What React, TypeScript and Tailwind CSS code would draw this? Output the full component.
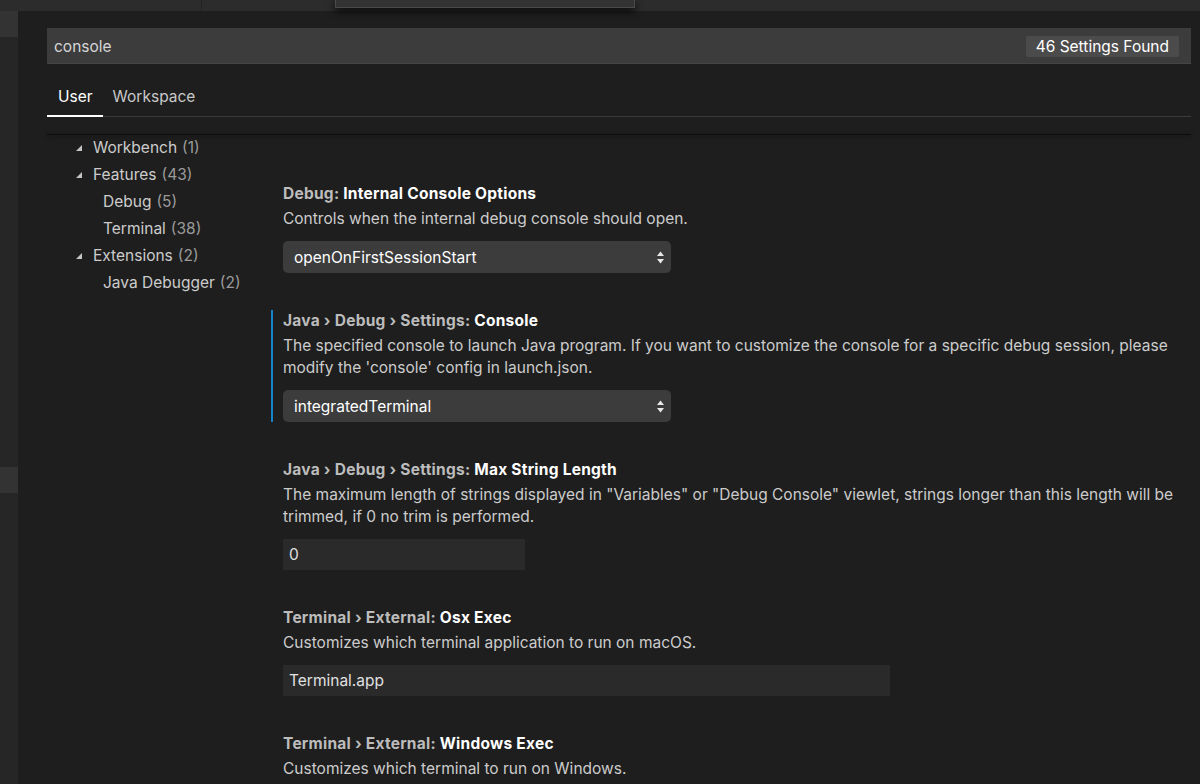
import React from "react";

type Setting = {
    prefix: string;
    name: string;
    desc: React.ReactNode;
    control: "select" | "input";
    value: string;
    width: string;
    focused?: boolean;
};

const settings: Setting[] = [
    {
        prefix: "Debug: ",
        name: "Internal Console Options",
        desc: "Controls when the internal debug console should open.",
        control: "select",
        value: "openOnFirstSessionStart",
        width: "w-[388px]",
    },
    {
        prefix: "Java › Debug › Settings: ",
        name: "Console",
        desc: (
            <>
                The specified console to launch Java program. If you want to customize the console for a specific debug session, please
                <br />
                modify the 'console' config in launch.json.
            </>
        ),
        control: "select",
        value: "integratedTerminal",
        width: "w-[388px]",
        focused: true,
    },
    {
        prefix: "Java › Debug › Settings: ",
        name: "Max String Length",
        desc: (
            <>
                The maximum length of strings displayed in "Variables" or "Debug Console" viewlet, strings longer than this length will be
                <br />
                trimmed, if 0 no trim is performed.
            </>
        ),
        control: "input",
        value: "0",
        width: "w-[242px]",
    },
    {
        prefix: "Terminal › External: ",
        name: "Osx Exec",
        desc: "Customizes which terminal application to run on macOS.",
        control: "input",
        value: "Terminal.app",
        width: "w-[607px]",
    },
    {
        prefix: "Terminal › External: ",
        name: "Windows Exec",
        desc: "Customizes which terminal to run on Windows.",
        control: "input",
        value: "",
        width: "w-[607px]",
    },
];

const tree = [
    { label: "Workbench", count: 1, level: 0 },
    { label: "Features", count: 43, level: 0 },
    { label: "Debug", count: 5, level: 1 },
    { label: "Terminal", count: 38, level: 1 },
    { label: "Extensions", count: 2, level: 0 },
    { label: "Java Debugger", count: 2, level: 1 },
];

const Twistie = () => (
    <svg width="6" height="6" viewBox="0 0 6 6" className="mr-[11px] shrink-0">
        <polygon points="6,0 6,6 0,6" fill="#c5c5c5" />
    </svg>
);

const SelectArrows = () => (
    <svg width="7" height="13" viewBox="0 0 7 13">
        <polygon points="3.5,0.5 7,5 0,5" fill="#e8e8e8" />
        <polygon points="0,8 7,8 3.5,12.5" fill="#e8e8e8" />
    </svg>
);

const SettingItem = ({ s }: { s: Setting }) => (
    <div className={`border-l-2 pl-[10px] ${s.focused ? "border-[#1283c9]" : "border-transparent"}`}>
        <div className="font-bold leading-[22px] tracking-[0.25px]">
            <span className="text-[#bcbcbc]">{s.prefix}</span>
            <span className="text-white">{s.name}</span>
        </div>
        <div className="mt-[3px] leading-[22px] text-[#cccccc]">{s.desc}</div>
        {s.control === "select" ? (
            <div className={`mt-[11px] h-[32px] ${s.width} rounded-[5px] bg-[#3c3c3c] pl-[11px] pr-[7px] pt-[1px] flex items-center justify-between text-white`}>
                <span>{s.value}</span>
                <SelectArrows />
            </div>
        ) : (
            <div className={`mt-[11px] h-[31px] ${s.width} bg-[#2a2a2a] pl-[6px] pt-[1px] flex items-center text-[#e0e0e0]`}>
                {s.value}
            </div>
        )}
    </div>
);

export default function App() {
    return (
        <div className="relative w-[1200px] h-[784px] overflow-hidden bg-[#1e1e1e] flex flex-col text-[15.5px] font-['Inter','Noto_Sans',sans-serif]">
            {/* Tab bar strip */}
            <div className="h-[11px] shrink-0 bg-[#2c2c2c] flex">
                <div className="w-[202px] border-r border-[#222]" />
            </div>
            <div className="absolute left-[335px] top-0 w-[300px] h-[8px] bg-[#333333] border-x border-b border-[#4a4a4a] shadow-[0_3px_8px_rgba(0,0,0,0.9)] z-10" />

            <div className="flex flex-1 min-h-0">
                {/* Activity strip */}
                <div className="w-[18px] shrink-0 bg-[#262626] flex flex-col">
                    <div className="h-[26px] bg-[#333333]" />
                    <div className="h-[430px]" />
                    <div className="h-[26px] bg-[#333333]" />
                </div>

                <div className="flex-1 pl-[29px] pr-[9px] flex flex-col min-w-0">
                    {/* Search */}
                    <div className="mt-[17px] h-[36px] shrink-0 bg-[#3c3c3c] border-b border-[#454545] flex items-center justify-between pl-[7px] pr-[12px] pt-[2px]">
                        <span className="text-[#d6d6d6]">console</span>
                        <span className="h-[21px] px-[10px] rounded-[2px] bg-[#4b4b4b] text-white flex items-center">46 Settings Found</span>
                    </div>

                    {/* Tabs */}
                    <div className="flex border-b border-[#3b3b3b] shrink-0">
                        <div className="pl-[11px] pr-[10px] pt-[22px] pb-[7px] leading-[22px] text-white border-b-2 border-white -mb-px">User</div>
                        <div className="pl-[10px] pt-[22px] pb-[7px] leading-[22px] text-[#c8c8c8]">Workspace</div>
                    </div>

                    {/* Body */}
                    <div className="relative mt-[17px] flex flex-1 min-h-0">
                        <div className="absolute inset-x-0 top-0 h-[1px] bg-[#0d0d0d] shadow-[0_1px_4px_rgba(0,0,0,0.7)] z-10" />

                        <div className="w-[224px] shrink-0 flex flex-col">
                            {tree.map((t) => (
                                <div
                                    key={t.label}
                                    className={`h-[27px] flex items-center ${t.level === 0 ? "pl-[29px]" : "pl-[56px]"}`}
                                >
                                    {t.level === 0 && <Twistie />}
                                    <span className="text-[#cccccc]">{t.label}</span>
                                    <span className="ml-[5px] text-[#9a9a9a]">({t.count})</span>
                                </div>
                            ))}
                        </div>

                        <div className="flex-1 flex flex-col min-w-0">
                            <div className="ml-[12px] h-[3px] w-[20px] rounded-b-[3px] bg-[#3a3a3a]" />
                            <div className="mt-[49px] flex flex-col gap-[37px]">
                                {settings.map((s, i) => (
                                    <SettingItem key={i} s={s} />
                                ))}
                            </div>
                        </div>
                    </div>
                </div>
            </div>
        </div>
    );
}
